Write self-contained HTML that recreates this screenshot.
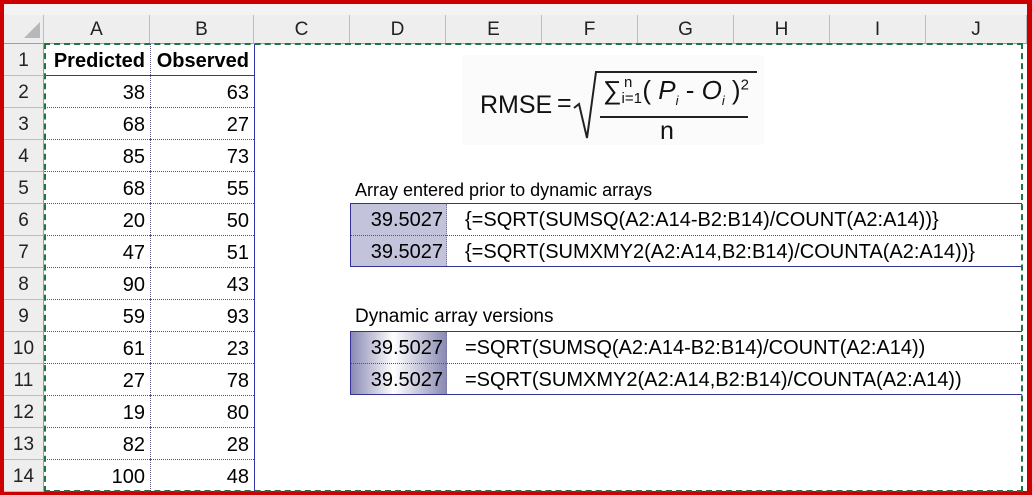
<!DOCTYPE html>
<html><head><style>
body{margin:0;width:1032px;height:495px;overflow:hidden;background:#fff;font-family:"Liberation Sans",sans-serif;position:relative}
.a{position:absolute}
.hd{position:absolute;top:15px;height:29px;background:#eeeeee;border-right:1px solid #bdbdbd;border-bottom:1px solid #9e9e9e;box-sizing:border-box;text-align:center;font-size:19px;line-height:30px;color:#222}
.rh{position:absolute;left:4px;width:40px;height:32px;background:#eeeeee;border-bottom:1px solid #bdbdbd;border-right:1px solid #9e9e9e;box-sizing:border-box;text-align:center;font-size:19px;line-height:33px;color:#222}
.c{position:absolute;height:32px;box-sizing:border-box;font-size:20px;line-height:34px;text-align:right;padding-right:5px;border-bottom:1px dotted #555577;color:#000}
.f{position:absolute;font-size:20px;line-height:32px;color:#000;white-space:nowrap}
</style></head><body>
<div class="a" style="left:0;top:0;width:1032px;height:495px;background:#cc0000"></div>
<div class="a" style="left:4px;top:4px;width:1023px;height:487px;background:#fff"></div>
<div class="a" style="left:4px;top:4px;width:1023px;height:11px;background:#f3f3f3"></div>
<div class="hd" style="left:4px;width:40px;background:#eeeeee"></div>
<div class="a" style="left:24px;top:22px;width:0;height:0;border-left:16px solid transparent;border-bottom:16px solid #b8b8b8"></div>
<div class="hd" style="left:44px;width:106px">A</div>
<div class="hd" style="left:150px;width:104px">B</div>
<div class="hd" style="left:254px;width:96px">C</div>
<div class="hd" style="left:350px;width:96px">D</div>
<div class="hd" style="left:446px;width:96px">E</div>
<div class="hd" style="left:542px;width:96px">F</div>
<div class="hd" style="left:638px;width:96px">G</div>
<div class="hd" style="left:734px;width:96px">H</div>
<div class="hd" style="left:830px;width:96px">I</div>
<div class="hd" style="left:926px;width:101px">J</div>
<div class="rh" style="top:44px">1</div><div class="rh" style="top:76px">2</div><div class="rh" style="top:108px">3</div><div class="rh" style="top:140px">4</div><div class="rh" style="top:172px">5</div><div class="rh" style="top:204px">6</div><div class="rh" style="top:236px">7</div><div class="rh" style="top:268px">8</div><div class="rh" style="top:300px">9</div><div class="rh" style="top:332px">10</div><div class="rh" style="top:364px">11</div><div class="rh" style="top:396px">12</div><div class="rh" style="top:428px">13</div><div class="rh" style="top:460px">14</div>
<div class="a" style="left:150px;top:44px;width:0;height:447px;border-left:1px dotted #555577"></div>
<div class="c" style="left:44px;top:44px;width:106px;font-weight:bold;border-bottom:1px solid #3333aa">Predicted</div>
<div class="c" style="left:150px;top:44px;width:104px;font-weight:bold;border-bottom:1px solid #3333aa">Observed</div>
<div class="c" style="left:44px;top:76px;width:106px">38</div><div class="c" style="left:150px;top:76px;width:104px">63</div>
<div class="c" style="left:44px;top:108px;width:106px">68</div><div class="c" style="left:150px;top:108px;width:104px">27</div>
<div class="c" style="left:44px;top:140px;width:106px">85</div><div class="c" style="left:150px;top:140px;width:104px">73</div>
<div class="c" style="left:44px;top:172px;width:106px">68</div><div class="c" style="left:150px;top:172px;width:104px">55</div>
<div class="c" style="left:44px;top:204px;width:106px">20</div><div class="c" style="left:150px;top:204px;width:104px">50</div>
<div class="c" style="left:44px;top:236px;width:106px">47</div><div class="c" style="left:150px;top:236px;width:104px">51</div>
<div class="c" style="left:44px;top:268px;width:106px">90</div><div class="c" style="left:150px;top:268px;width:104px">43</div>
<div class="c" style="left:44px;top:300px;width:106px">59</div><div class="c" style="left:150px;top:300px;width:104px">93</div>
<div class="c" style="left:44px;top:332px;width:106px">61</div><div class="c" style="left:150px;top:332px;width:104px">23</div>
<div class="c" style="left:44px;top:364px;width:106px">27</div><div class="c" style="left:150px;top:364px;width:104px">78</div>
<div class="c" style="left:44px;top:396px;width:106px">19</div><div class="c" style="left:150px;top:396px;width:104px">80</div>
<div class="c" style="left:44px;top:428px;width:106px">82</div><div class="c" style="left:150px;top:428px;width:104px">28</div>
<div class="c" style="left:44px;top:460px;width:106px;border-bottom:none">100</div><div class="c" style="left:150px;top:460px;width:104px;border-bottom:none">48</div>
<div class="a" style="left:254px;top:44px;width:0;height:447px;border-left:1px solid #3333aa"></div>
<!-- formula image -->
<div class="a" style="left:462px;top:55px;width:302px;height:90px;background:#fbfbfb"></div>
<div class="a" style="left:480px;top:91px;font-size:25px;color:#111">RMSE</div>
<div class="a" style="left:557px;top:89px;font-size:25px;color:#111">=</div>
<svg class="a" style="left:572px;top:62px" width="190" height="80"><path d="M2 46 L7 42 L15 76 L24 10 L185 10" fill="none" stroke="#222" stroke-width="2"/></svg>
<div class="a" style="left:603px;top:75px;font-size:26px;color:#111;white-space:nowrap">∑<span style="font-size:15px;position:relative;top:4px">i=1</span><span style="font-size:15px;position:relative;top:-12px;left:-18px">n</span><span style="margin-left:-8px">(</span> <i>P<sub style="font-size:13px">i</sub></i> - <i>O<sub style="font-size:13px">i</sub></i> )<sup style="font-size:15px">2</sup></div>
<div class="a" style="left:600px;top:116px;width:148px;height:0;border-top:2px solid #222"></div>
<div class="a" style="left:660px;top:117px;font-size:25px;color:#111">n</div>
<!-- array section -->
<div class="f" style="left:355px;top:174px;font-size:18px">Array entered prior to dynamic arrays</div>
<div class="a" style="left:350px;top:203px;width:672px;height:64px;box-sizing:border-box;border:1px solid #333399;border-right:none"></div>
<div class="a" style="left:351px;top:204px;width:95px;height:62px;background:#c3c3dc;border-right:1px dotted #777"></div>
<div class="a" style="left:351px;top:235px;width:671px;border-top:1px dotted #555"></div>
<div class="f" style="left:351px;top:204px;width:92px;text-align:right">39.5027</div>
<div class="f" style="left:351px;top:236px;width:92px;text-align:right">39.5027</div>
<div class="f" style="left:465px;top:204px">{=SQRT(SUMSQ(A2:A14-B2:B14)/COUNT(A2:A14))}</div>
<div class="f" style="left:465px;top:236px">{=SQRT(SUMXMY2(A2:A14,B2:B14)/COUNTA(A2:A14))}</div>
<div class="f" style="left:355px;top:301px;font-size:19px">Dynamic array versions</div>
<div class="a" style="left:350px;top:331px;width:672px;height:64px;box-sizing:border-box;border:1px solid #333399;border-right:none"></div>
<div class="a" style="left:351px;top:332px;width:95px;height:62px;background:linear-gradient(90deg,#8a8ab4,#ffffff 45%,#8a8ab4);border-right:1px dotted #777"></div>
<div class="a" style="left:351px;top:363px;width:671px;border-top:1px dotted #555"></div>
<div class="f" style="left:351px;top:332px;width:92px;text-align:right">39.5027</div>
<div class="f" style="left:351px;top:364px;width:92px;text-align:right">39.5027</div>
<div class="f" style="left:465px;top:332px">=SQRT(SUMSQ(A2:A14-B2:B14)/COUNT(A2:A14))</div>
<div class="f" style="left:465px;top:364px">=SQRT(SUMXMY2(A2:A14,B2:B14)/COUNTA(A2:A14))</div>
<div class="a" style="left:44px;top:43px;width:979px;height:449px;box-sizing:border-box;border:2px dashed #217346"></div>
</body></html>
